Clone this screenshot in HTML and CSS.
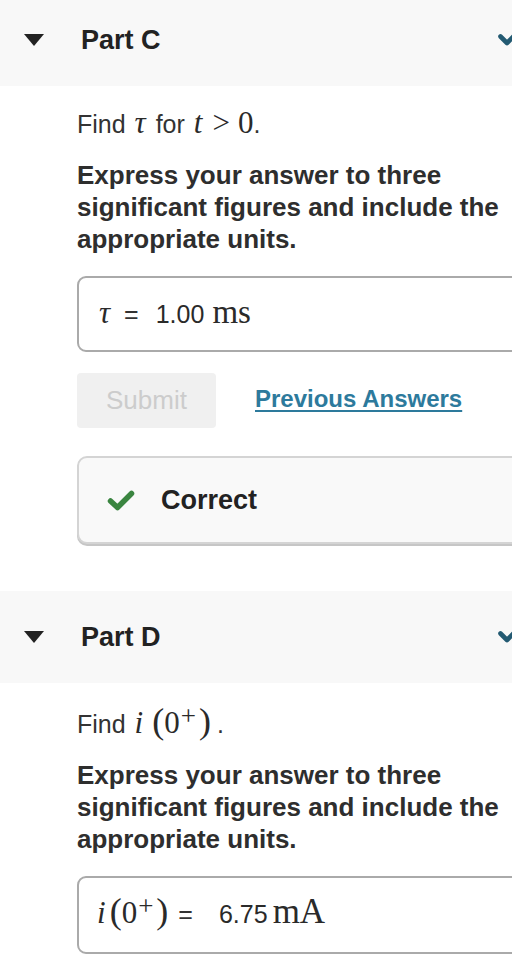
FILE: index.html
```html
<!DOCTYPE html>
<html lang="en">
<head>
<meta charset="utf-8">
<title>Parts C and D</title>
<link rel="stylesheet" href="styles.css">
</head>
<body>
<div class="page">
  <section class="part">
    <div class="part-head">
      <span class="caret"></span>
      <h2 class="part-title">Part C</h2>
      <svg class="chev" width="18" height="12" viewBox="0 0 18 12"><polyline points="2.5,2.5 9,9 15.5,2.5" fill="none" stroke="#235a72" stroke-width="4.6" stroke-linecap="round" stroke-linejoin="round"/></svg>
    </div>
    <div class="part-body">
      <p class="prompt">Find <span class="m mi">τ</span> for <span class="m mi">t</span><span class="m rel">&gt;</span><span class="m">0</span>.</p>
      <p class="instr">Express your answer to three significant figures and include the appropriate units.</p>
      <div class="answer">
        <span class="m mi">τ</span><span class="eq">=</span><span class="num">1.00</span><span class="m unit">ms</span>
      </div>
      <div class="actions">
        <button class="submit" type="button">Submit</button>
        <a class="prev" href="#">Previous Answers</a>
      </div>
      <div class="feedback">
        <svg class="check" width="28" height="21" viewBox="0 0 28 21"><polyline points="3.5,11 10.5,17.5 24.5,3.5" fill="none" stroke="#3a8540" stroke-width="5.5" stroke-linecap="round" stroke-linejoin="round"/></svg>
        <span class="fb-text">Correct</span>
      </div>
    </div>
  </section>

  <section class="part">
    <div class="part-head">
      <span class="caret"></span>
      <h2 class="part-title">Part D</h2>
      <svg class="chev" width="18" height="12" viewBox="0 0 18 12"><polyline points="2.5,2.5 9,9 15.5,2.5" fill="none" stroke="#235a72" stroke-width="4.6" stroke-linecap="round" stroke-linejoin="round"/></svg>
    </div>
    <div class="part-body">
      <p class="prompt prompt-d">Find <span class="m mi">i</span><span class="m paren"><span class="delim">(</span>0<sup class="sup">+</sup><span class="delim">)</span></span>.</p>
      <p class="instr">Express your answer to three significant figures and include the appropriate units.</p>
      <div class="answer answer-d">
        <span class="m mi">i</span><span class="m paren"><span class="delim">(</span>0<sup class="sup">+</sup><span class="delim">)</span></span><span class="eq">=</span><span class="num">6.75</span><span class="m unit unit-wide">mA</span>
      </div>
    </div>
  </section>
</div>
</body>
</html>
```

FILE: styles.css
```css
html, body {
  margin: 0;
  padding: 0;
  overflow: hidden;
  background: #ffffff;
}

body {
  font-family: "Liberation Sans", Arial, Helvetica, sans-serif;
  color: #333333;
}

.page {
  width: 530px;
  margin-top: -6px;
}

.part-head {
  display: flex;
  align-items: center;
  height: 92px;
  background: #f8f8f8;
  padding-left: 24px;
  padding-right: 14px;
}

.caret {
  width: 0;
  height: 0;
  border-left: 10.5px solid transparent;
  border-right: 10.5px solid transparent;
  border-top: 12px solid #222222;
}

.part-title {
  margin: 0 0 0 37px;
  font-size: 27px;
  font-weight: bold;
  color: #222222;
}

.chev {
  margin-left: auto;
  display: block;
}

.part-body {
  padding: 0 0 47px 77px;
}

.prompt {
  margin: 18px 0 0 0;
  font-size: 25px;
  line-height: 40px;
  color: #333333;
}

.prompt-d {
  margin-top: 20px;
}

.m {
  font-family: "Liberation Serif", "Times New Roman", serif;
  font-size: 31px;
  line-height: 1;
  color: #2a2a2a;
}

.mi {
  font-style: italic;
}

.prompt .mi {
  margin-left: 2px;
  margin-right: 3px;
}

.rel {
  margin: 0 8px 0 7px;
}

.paren {
  margin-left: 6px;
  margin-right: 6px;
}

.delim {
  font-size: 36px;
  line-height: 1;
}

.sup {
  font-size: 27px;
  line-height: 0;
  vertical-align: 8px;
  margin-left: 1px;
  margin-right: 3px;
}

.instr {
  margin: 15px 0 0 0;
  width: 432px;
  font-size: 26px;
  line-height: 32px;
  font-weight: bold;
  color: #2e2e2e;
}

.answer {
  display: flex;
  align-items: baseline;
  box-sizing: border-box;
  width: 470px;
  height: 76px;
  margin-top: 21px;
  padding: 18px 0 0 20px;
  border: 2px solid #aaaaaa;
  border-radius: 9px;
}

.answer-d {
  margin-top: 21px;
  padding-top: 15px;
  padding-left: 18px;
  height: 78px;
}

.answer .mi {
  margin: 0;
}

.answer .paren {
  margin-left: 4px;
  margin-right: 0;
}

.eq {
  font-size: 25px;
  margin: 0 17px 0 14px;
  color: #333333;
}

.answer-d .eq {
  margin: 0 26px 0 10px;
}

.num {
  font-size: 25px;
  color: #2a2a2a;
}

.unit {
  font-size: 33px;
  margin-left: 8px;
}

.unit-wide {
  font-size: 35px;
  margin-left: 5px;
}

.actions {
  display: flex;
  align-items: center;
  margin-top: 21px;
}

.submit {
  width: 139px;
  height: 55px;
  background: #f0f0f0;
  border: none;
  border-radius: 4px;
  font-family: "Liberation Sans", Arial, sans-serif;
  font-size: 26px;
  color: #cccccc;
  padding: 0;
}

.prev {
  margin-left: 39px;
  margin-top: -4px;
  font-size: 24px;
  font-weight: bold;
  color: #2d7a9c;
  text-decoration: underline;
  text-decoration-thickness: 2px;
  text-underline-offset: 3px;
}

.feedback {
  display: flex;
  align-items: center;
  box-sizing: border-box;
  width: 470px;
  height: 88px;
  margin-top: 28px;
  padding-left: 28px;
  background: #f9f9f9;
  border: 2px solid #d4d4d4;
  border-radius: 10px;
  box-shadow: 0 2px 0 #c6c6c6;
}

.check {
  display: block;
}

.fb-text {
  margin-left: 26px;
  font-size: 27px;
  font-weight: bold;
  color: #222222;
}
```
